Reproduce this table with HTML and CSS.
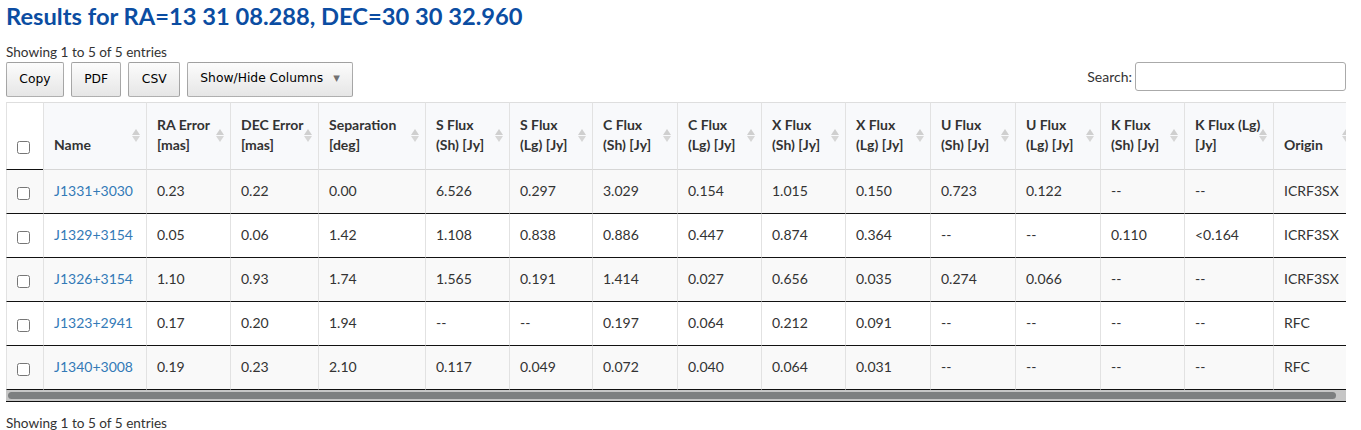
FILE: index.html
```html
<!DOCTYPE html>
<html>
<head>
<meta charset="utf-8">
<link rel="stylesheet" href="styles.css">
</head>
<body>
<div class="page">
  <h2 class="title">Results for RA=13 31 08.288, DEC=30 30 32.960</h2>
  <div class="info info-top">Showing 1 to 5 of 5 entries</div>
  <div class="toolbar">
    <div class="buttons">
      <button class="btn">Copy</button>
      <button class="btn">PDF</button>
      <button class="btn">CSV</button>
      <button class="btn">Show/Hide Columns<span class="down-arrow">▼</span></button>
    </div>
    <label class="search">Search:<input class="search-input" type="search"></label>
  </div>
  <div class="scroll">
    <div class="clip">
      <table class="grid">
        <colgroup>
          <col class="w37"><col class="w103"><col class="w84"><col class="w88"><col class="w107">
          <col class="w84"><col class="w83"><col class="w85"><col class="w84"><col class="w84">
          <col class="w85"><col class="w85"><col class="w85"><col class="w84"><col class="w89"><col class="w83">
        </colgroup>
        <thead>
          <tr>
            <th class="cb"><input class="check" type="checkbox"></th>
            <th class="sort">Name</th>
            <th class="sort">RA Error<br>[mas]</th>
            <th class="sort">DEC Error<br>[mas]</th>
            <th class="sort">Separation<br>[deg]</th>
            <th class="sort">S Flux<br>(Sh) [Jy]</th>
            <th class="sort">S Flux<br>(Lg) [Jy]</th>
            <th class="sort">C Flux<br>(Sh) [Jy]</th>
            <th class="sort">C Flux<br>(Lg) [Jy]</th>
            <th class="sort">X Flux<br>(Sh) [Jy]</th>
            <th class="sort">X Flux<br>(Lg) [Jy]</th>
            <th class="sort">U Flux<br>(Sh) [Jy]</th>
            <th class="sort">U Flux<br>(Lg) [Jy]</th>
            <th class="sort">K Flux<br>(Sh) [Jy]</th>
            <th class="sort">K Flux (Lg)<br>[Jy]</th>
            <th class="sort">Origin</th>
          </tr>
        </thead>
        <tbody>
          <tr class="odd">
            <td class="cb"><input class="check" type="checkbox"></td>
            <td><a class="link" href="#">J1331+3030</a></td>
            <td>0.23</td><td>0.22</td><td>0.00</td>
            <td>6.526</td><td>0.297</td><td>3.029</td><td>0.154</td><td>1.015</td><td>0.150</td>
            <td>0.723</td><td>0.122</td><td>--</td><td>--</td><td>ICRF3SX</td>
          </tr>
          <tr class="even">
            <td class="cb"><input class="check" type="checkbox"></td>
            <td><a class="link" href="#">J1329+3154</a></td>
            <td>0.05</td><td>0.06</td><td>1.42</td>
            <td>1.108</td><td>0.838</td><td>0.886</td><td>0.447</td><td>0.874</td><td>0.364</td>
            <td>--</td><td>--</td><td>0.110</td><td>&lt;0.164</td><td>ICRF3SX</td>
          </tr>
          <tr class="odd">
            <td class="cb"><input class="check" type="checkbox"></td>
            <td><a class="link" href="#">J1326+3154</a></td>
            <td>1.10</td><td>0.93</td><td>1.74</td>
            <td>1.565</td><td>0.191</td><td>1.414</td><td>0.027</td><td>0.656</td><td>0.035</td>
            <td>0.274</td><td>0.066</td><td>--</td><td>--</td><td>ICRF3SX</td>
          </tr>
          <tr class="even">
            <td class="cb"><input class="check" type="checkbox"></td>
            <td><a class="link" href="#">J1323+2941</a></td>
            <td>0.17</td><td>0.20</td><td>1.94</td>
            <td>--</td><td>--</td><td>0.197</td><td>0.064</td><td>0.212</td><td>0.091</td>
            <td>--</td><td>--</td><td>--</td><td>--</td><td>RFC</td>
          </tr>
          <tr class="odd">
            <td class="cb"><input class="check" type="checkbox"></td>
            <td><a class="link" href="#">J1340+3008</a></td>
            <td>0.19</td><td>0.23</td><td>2.10</td>
            <td>0.117</td><td>0.049</td><td>0.072</td><td>0.040</td><td>0.064</td><td>0.031</td>
            <td>--</td><td>--</td><td>--</td><td>--</td><td>RFC</td>
          </tr>
        </tbody>
      </table>
    </div>
    <div class="scrollbar"><div class="thumb"></div></div>
  </div>
  <div class="info info-bottom">Showing 1 to 5 of 5 entries</div>
</div>
</body>
</html>
```

FILE: styles.css
```css
html, body {
  margin: 0;
  padding: 0;
  background: #ffffff;
}
body {
  font-family: Lato, "Open Sans", sans-serif;
  font-size: 14px;
  line-height: 20px;
  color: #333333;
}
.page {
  width: 1340px;
  padding-left: 6px;
}
.title {
  margin: 3px 0 0 0;
  font-size: 23.7px;
  line-height: 26px;
  font-weight: 700;
  color: #0b4da2;
}
.info {
  font-size: 13.6px;
  line-height: 18px;
  color: #333333;
}
.info-top {
  margin-top: 14px;
}
.info-bottom {
  margin-top: 12px;
}
.toolbar {
  margin-top: 1px;
  display: flex;
  justify-content: space-between;
  align-items: flex-start;
}
.buttons {
  display: flex;
  gap: 7px;
}
.btn {
  font-family: "DejaVu Sans", Verdana, sans-serif;
  font-weight: 400;
  font-size: 12.32px;
  line-height: 1.6em;
  padding: 0.5em 1em;
  margin: 0;
  border: 1px solid rgba(0, 0, 0, 0.3);
  border-radius: 2px;
  color: #000000;
  background: linear-gradient(to bottom, #fcfcfc 0%, #e6e6e6 100%);
  cursor: pointer;
}
.down-arrow {
  font-size: 70%;
  padding-left: 10px;
  color: rgba(70, 70, 70, 0.75);
  position: relative;
  top: -1px;
}
.search {
  display: flex;
  align-items: center;
  height: 29px;
  font-size: 14px;
  color: #333333;
}
.search-input {
  box-sizing: border-box;
  width: 211px;
  height: 29px;
  margin: 0 0 0 3px;
  padding: 5px;
  border: 1px solid #aaaaaa;
  border-radius: 3px;
  background: transparent;
  font-family: Lato, sans-serif;
  font-size: 14px;
}
.scroll {
  margin-top: 5px;
  width: 1340px;
  border-bottom: 1px solid #111111;
}
.clip {
  width: 1340px;
  overflow: hidden;
}
.grid {
  table-layout: fixed;
  width: 1350px;
  border-collapse: separate;
  border-spacing: 0;
}
.w37 { width: 37px; }
.w83 { width: 83px; }
.w84 { width: 84px; }
.w85 { width: 85px; }
.w88 { width: 88px; }
.w89 { width: 89px; }
.w103 { width: 103px; }
.w107 { width: 107px; }
.grid th {
  position: relative;
  text-align: left;
  vertical-align: bottom;
  font-weight: 700;
  padding: 12px 10px 14px 10px;
  line-height: 20px;
  background: #f8f9fb;
  border-top: 1px solid #dedede;
  border-bottom: 1px solid #d6d6d6;
  border-left: 1px solid #e2e2e2;
  white-space: nowrap;
}
.grid th.cb {
  border-bottom-color: #111111;
  background: #ffffff;
}
.grid th.sort::before,
.grid th.sort::after {
  content: "";
  position: absolute;
  right: 6px;
  width: 0;
  height: 0;
  border-left: 4px solid transparent;
  border-right: 4px solid transparent;
}
.grid th.sort::before {
  top: calc(50% - 7px);
  border-bottom: 6px solid #cfcfcf;
}
.grid th.sort::after {
  top: calc(50%);
  border-top: 6px solid #d6d6d6;
}
.grid td {
  padding: 11px 10px 12px 10px;
  line-height: 20px;
  border-left: 1px solid #e2e2e2;
  border-bottom: 1px solid #111111;
  white-space: nowrap;
  overflow: hidden;
}
.grid tr.odd td {
  background: #f9f9f9;
}
.grid tr.even td {
  background: #ffffff;
}
.check {
  display: block;
  width: 13px;
  height: 13px;
  margin: 0;
}
.grid td.cb .check {
  margin-top: 4px;
}
.grid th.cb .check {
  margin-bottom: 1px;
}
.link {
  color: #337ab7;
  text-decoration: none;
}
.scrollbar {
  height: 11px;
  background: #c6c6c6;
  display: flex;
  align-items: center;
  padding-left: 2px;
}
.thumb {
  width: 1328px;
  height: 7px;
  border-radius: 4px;
  background: #7d7f80;
}
```
